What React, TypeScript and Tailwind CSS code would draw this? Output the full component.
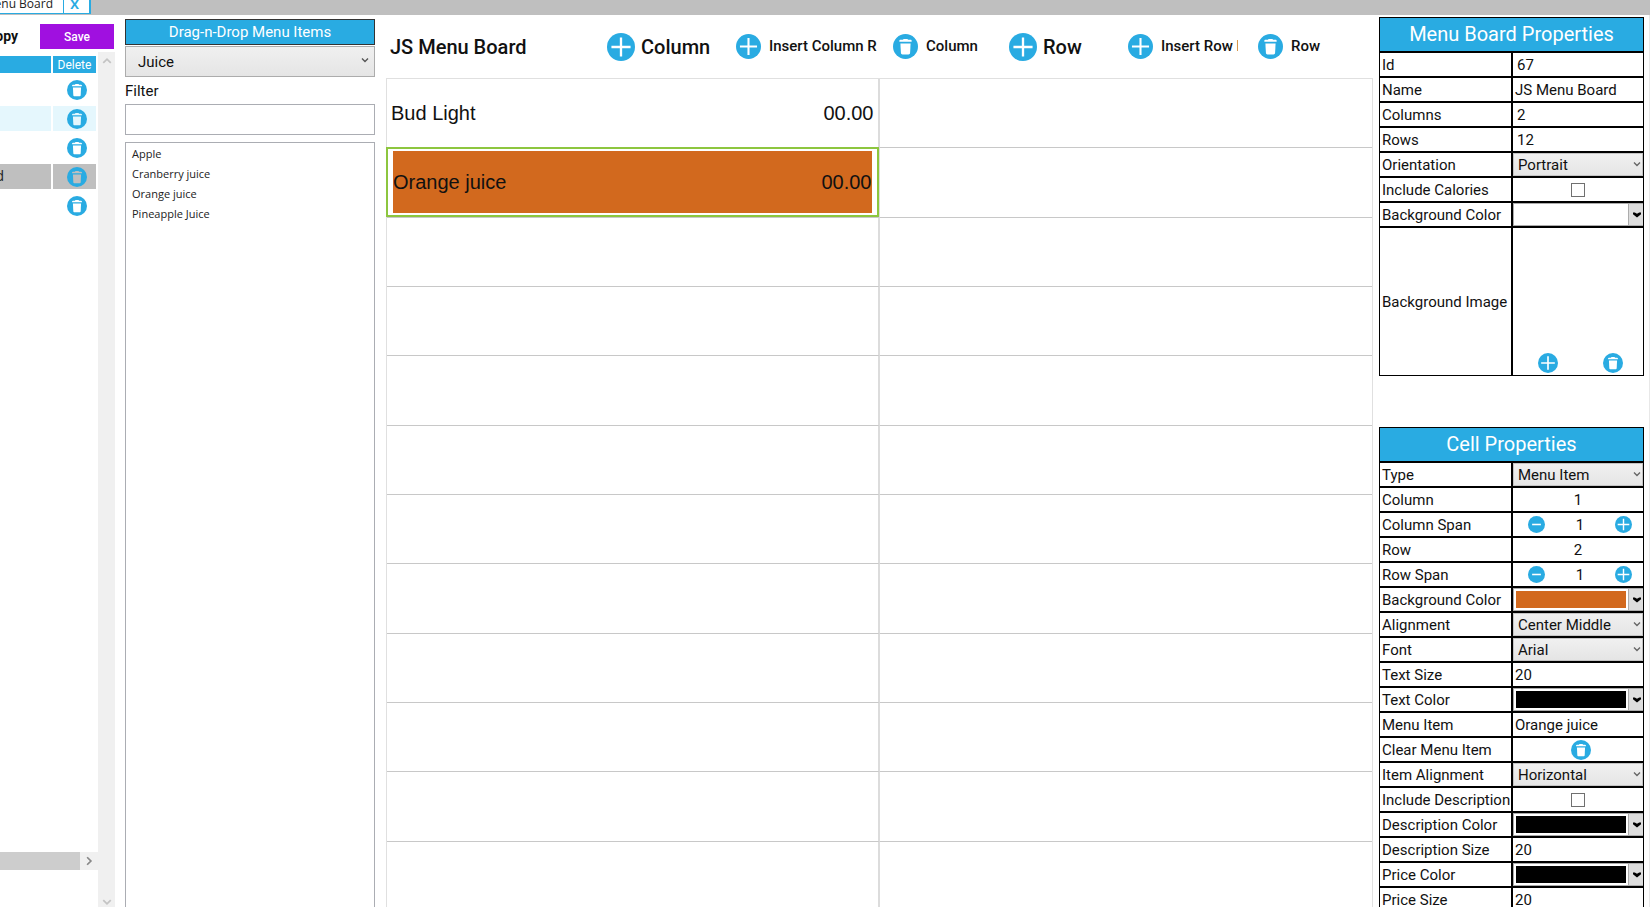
import React, { useState } from 'react';

type IconProps = { className?: string };

const PlusIcon: React.FC<IconProps> = ({ className }) => (
  <svg viewBox="0 0 24 24" className={className} aria-hidden>
    <circle cx="12" cy="12" r="12" fill="#29abe2" />
    <path d="M12 3.8v16.4M3.8 12h16.4" stroke="#fff" strokeWidth="2" fill="none" />
  </svg>
);

const MinusIcon: React.FC<IconProps> = ({ className }) => (
  <svg viewBox="0 0 24 24" className={className} aria-hidden>
    <circle cx="12" cy="12" r="12" fill="#29abe2" />
    <path d="M5.8 12h12.4" stroke="#fff" strokeWidth="2.2" fill="none" />
  </svg>
);

const TrashIcon: React.FC<IconProps> = ({ className }) => (
  <svg viewBox="0 0 24 24" className={className} aria-hidden>
    <circle cx="12" cy="12" r="12" fill="#29abe2" />
    <path
      d="M9.4 5.6c.2-.6.6-.8 1.200-.8h2.800c.6 0 1 .2 1.200.8h2.200c.7 0 1.100.4 1.100 1v.9H6.100v-.9c0-.6.4-1 1.100-1z"
      fill="currentColor"
    />
    <path d="M7.100 9h9.800l-.5 9.200c-.1.900-.6 1.400-1.500 1.400H9.100c-.9 0-1.400-.5-1.500-1.400z" fill="currentColor" />
  </svg>
);

const Chevron: React.FC<IconProps> = ({ className }) => (
  <svg viewBox="0 0 8 8" className={className} aria-hidden>
    <path d="M1 2.500l3 3 3-3" stroke="currentColor" strokeWidth="1.400" fill="none" />
  </svg>
);

const BOARDS = [
  { id: 63, tail: '', cell: 'bg-white', icon: 'size-5 text-white' },
  { id: 64, tail: '', cell: 'bg-[#e5f7fd]', icon: 'size-5 text-[#e5f7fd]' },
  { id: 65, tail: '', cell: 'bg-white', icon: 'size-5 text-white' },
  { id: 67, tail: 'JS Menu Board', cell: 'bg-[#bfbfbf]', icon: 'size-5 text-[#bfbfbf]' },
  { id: 68, tail: '', cell: 'bg-white', icon: 'size-5 text-white' },
];

const ITEMS = ['Apple', 'Cranberry juice', 'Orange juice', 'Pineapple Juice'];

const ROWS = 12;

const BoardList: React.FC = () => (
  <aside className="flex w-[115px] shrink-0 flex-col">
    <div className="flex h-[37px] shrink-0 items-end justify-between pr-px pb-[3px]">
      <button className="flex h-[25px] w-[18px] items-center justify-end text-[14px] font-bold">Copy</button>
      <button className="h-[25px] w-[74px] bg-[#a010e0] text-[12px] font-medium text-white">Save</button>
    </div>
    <div className="flex min-h-0 flex-1">
      <div className="flex w-[98px] flex-col pb-[37px]">
        <div className="flex-1 overflow-hidden pr-0.5">
          <table className="w-full table-fixed border-separate border-spacing-x-0 border-spacing-y-1">
            <thead>
              <tr className="h-[17px] text-[12px] leading-[15px] text-white">
                <th className="w-[51px] bg-[#29abe2] p-0" aria-label="Name" />
                <th className="border-l-2 border-white bg-[#29abe2] bg-clip-padding p-0 pt-0.5 font-normal">Delete</th>
              </tr>
            </thead>
            <tbody>
              {BOARDS.map((b) => (
                <tr key={b.id} className="h-[25px]">
                  <td className={`p-0 ${b.cell}`}>
                    <div className="flex w-1 justify-end pb-0.5 whitespace-nowrap font-['Open_Sans',sans-serif] text-[14px] leading-5 text-[#222]">
                      {b.tail}
                    </div>
                  </td>
                  <td className={`border-l-2 border-white bg-clip-padding p-0 ${b.cell}`}>
                    <button className="mx-auto block pl-1" aria-label="Delete board">
                      <TrashIcon className={b.icon} />
                    </button>
                  </td>
                </tr>
              ))}
            </tbody>
          </table>
        </div>
        <div className="flex h-[18px] shrink-0 bg-[#f0f0f0]">
          <div className="w-20 bg-[#cdcdcd]" />
          <button className="flex flex-1 items-center justify-center text-[#888]" aria-label="Scroll right">
            <Chevron className="size-2.5 -rotate-90" />
          </button>
        </div>
      </div>
      <div className="flex flex-1 flex-col items-center justify-between bg-[#f0f0f0] text-[#c4c4c4]">
        <button className="pt-1" aria-label="Scroll up">
          <Chevron className="size-2.5 rotate-180" />
        </button>
        <button aria-label="Scroll down">
          <Chevron className="size-2.5" />
        </button>
      </div>
    </div>
  </aside>
);

const ItemPicker: React.FC = () => {
  const [filter, setFilter] = useState('');
  const shown = ITEMS.filter((i) => i.toLowerCase().includes(filter.toLowerCase()));

  return (
    <section className="flex w-[250px] shrink-0 flex-col pt-1">
      <h2 className="flex h-[26px] shrink-0 items-center justify-center border border-[#333] bg-[#29abe2] text-[15px] text-white">
        Drag-n-Drop Menu Items
      </h2>
      <div className="relative mt-px">
        <select
          aria-label="Category"
          className="block h-[31px] w-full appearance-none border border-[#acacac] bg-linear-to-b from-[#f0f0f0] to-[#e5e5e5] pt-0.5 pl-3 text-[15px]"
        >
          <option>Juice</option>
        </select>
        <Chevron className="pointer-events-none absolute top-2.5 right-1.5 size-2 text-[#555]" />
      </div>
      <label htmlFor="filter" className="flex h-[27px] shrink-0 items-center text-[15px] leading-5">
        Filter
      </label>
      <input
        id="filter"
        value={filter}
        onChange={(e) => setFilter(e.target.value)}
        className="h-[31px] shrink-0 border border-[#abadb3] px-1 text-[15px] outline-none"
      />
      <ul className="mt-[7px] flex-1 border border-b-0 border-[#abadb3] px-1.5 py-px font-['Open_Sans',sans-serif] text-[11px] leading-5 text-[#222]">
        {shown.map((i) => (
          <li key={i} draggable>{i}</li>
        ))}
      </ul>
    </section>
  );
};

const Board: React.FC = () => (
  <main className="flex min-w-0 flex-1 flex-col">
    <div className="grid h-[63px] shrink-0 grid-cols-[221fr_129fr_157fr_116fr_119fr_130fr_115fr] items-center font-medium *:min-w-0">
      <h1 className="pl-1 text-[20px]">JS Menu Board</h1>
      <button className="flex items-center gap-1.5 text-[20px]">
        <PlusIcon className="size-7" />
        Column
      </button>
      <button className="flex items-center gap-2 pr-4 text-[15px]">
        <PlusIcon className="size-[25px] shrink-0" />
        <span className="overflow-hidden whitespace-nowrap">Insert Column Right</span>
      </button>
      <button className="flex items-center gap-2 text-[15px]">
        <TrashIcon className="size-[25px] text-white" />
        Column
      </button>
      <button className="flex items-center gap-1.5 text-[20px]">
        <PlusIcon className="size-7" />
        Row
      </button>
      <button className="flex items-center gap-2 pr-5 text-[15px]">
        <PlusIcon className="size-[25px] shrink-0" />
        <span className="overflow-hidden whitespace-nowrap">Insert Row Below</span>
      </button>
      <button className="flex items-center gap-2 text-[15px]">
        <TrashIcon className="size-[25px] text-white" />
        Row
      </button>
    </div>
    <div className="-mb-1 grid min-h-0 flex-1 auto-rows-fr grid-cols-2 border-x border-t border-[#e0e0e0] font-['Liberation_Sans',Arial,sans-serif] text-[20px]">
      {Array.from({ length: ROWS }, (_, row) => (
        <React.Fragment key={row}>
          <div className="min-h-0 border-r-2 border-b border-r-[#dcdcdc] border-b-[#c8c8c8]">
            {row === 0 && (
              <div className="flex h-full items-center justify-between px-1">
                <span>Bud Light</span>
                <span>00.00</span>
              </div>
            )}
            {row === 1 && (
              <div className="-mt-px -mr-px -ml-px h-[calc(100%+1px)] border-2 border-[#8dc63f] px-[5px] py-0.5">
                <div className="flex h-full items-center justify-between bg-[#d2691e]">
                  <span>Orange juice</span>
                  <span>00.00</span>
                </div>
              </div>
            )}
          </div>
          <div className="min-h-0 border-b border-[#c8c8c8]" />
        </React.Fragment>
      ))}
    </div>
  </main>
);

const PropTable: React.FC<{ title: string; children: React.ReactNode }> = ({ title, children }) => (
  <table className="w-full table-fixed border-separate border-spacing-0 border border-black text-[15px] leading-5">
    <colgroup>
      <col className="w-[131px]" />
      <col />
    </colgroup>
    <thead>
      <tr>
        <th colSpan={2} className="h-[33px] bg-[#29abe2] p-0 pb-0.5 text-[20px] font-normal text-white">
          {title}
        </th>
      </tr>
    </thead>
    <tbody>{children}</tbody>
  </table>
);

const Prop: React.FC<{ label: string; id?: string; children: React.ReactNode }> = ({ label, id, children }) => (
  <tr className="h-[25px]">
    <th scope="row" className="border-t-2 border-black p-0 pl-0.5 text-left font-normal whitespace-nowrap">
      {id ? <label htmlFor={id}>{label}</label> : label}
    </th>
    <td className="border-t-2 border-l-2 border-black p-0">{children}</td>
  </tr>
);

const TextProp: React.FC<{ label: string; id: string; value: string }> = ({ label, id, value }) => (
  <Prop label={label} id={id}>
    <input id={id} defaultValue={value} className="block h-[23px] w-full bg-transparent pl-0.5 outline-none" />
  </Prop>
);

const SelectProp: React.FC<{ label: string; id: string; value: string }> = ({ label, id, value }) => (
  <Prop label={label} id={id}>
    <div className="relative">
      <select
        id={id}
        className="block h-[23px] w-full appearance-none border border-[#c4c4c4] bg-linear-to-b from-[#f0f0f0] to-[#e5e5e5] pl-1"
      >
        <option>{value}</option>
      </select>
      <Chevron className="pointer-events-none absolute top-[7px] right-0.5 size-2 text-[#666]" />
    </div>
  </Prop>
);

const CheckProp: React.FC<{ label: string; id: string }> = ({ label, id }) => (
  <Prop label={label} id={id}>
    <input id={id} type="checkbox" className="mx-auto block size-3.5 appearance-none border border-[#707070] bg-white" />
  </Prop>
);

const ColorProp: React.FC<{ label: string; id: string; swatch: string }> = ({ label, id, swatch }) => (
  <Prop label={label} id={id}>
    <button id={id} aria-haspopup="listbox" className="flex h-[23px] w-full border border-r-0 border-[#acacac]">
      <span className="flex h-full flex-1 p-0.5">
        <span className={`flex-1 ${swatch}`} />
      </span>
      <span className="flex h-full w-[15px] items-center justify-end border-l border-[#acacac] bg-[#dddddd] pr-px">
        <svg viewBox="0 0 10 6" className="h-1.5 w-2.5" aria-hidden>
          <path d="M1 .5h1.800L5 1.800 7.200.5H9v1.800L5 5.500 1 2.300z" fill="#000" />
        </svg>
      </span>
    </button>
  </Prop>
);

const SpanProp: React.FC<{ label: string }> = ({ label }) => {
  const [span, setSpan] = useState(1);
  return (
    <Prop label={label}>
      <div className="flex items-center justify-between pr-[11px] pl-[15px]">
        <button aria-label={`Decrease ${label}`} onClick={() => setSpan(Math.max(1, span - 1))}>
          <MinusIcon className="size-[17px]" />
        </button>
        <span>{span}</span>
        <button aria-label={`Increase ${label}`} onClick={() => setSpan(span + 1)}>
          <PlusIcon className="size-[17px]" />
        </button>
      </div>
    </Prop>
  );
};

const Properties: React.FC = () => (
  <aside className="flex w-[271px] shrink-0 flex-col gap-[51px] border-r border-[#e8e8e8] pt-0.5 pr-[5px]">
    <PropTable title="Menu Board Properties">
      <Prop label="Id"><span className="pl-1">67</span></Prop>
      <TextProp label="Name" id="board-name" value="JS Menu Board" />
      <Prop label="Columns"><span className="pl-1">2</span></Prop>
      <Prop label="Rows"><span className="pl-1">12</span></Prop>
      <SelectProp label="Orientation" id="orientation" value="Portrait" />
      <CheckProp label="Include Calories" id="calories" />
      <ColorProp label="Background Color" id="board-bg" swatch="bg-white" />
      <Prop label="Background Image">
        <div className="flex h-[147px] items-end justify-between pr-5 pb-0.5 pl-[25px]">
          <button aria-label="Add image"><PlusIcon className="size-5" /></button>
          <button aria-label="Delete image"><TrashIcon className="size-5 text-white" /></button>
        </div>
      </Prop>
    </PropTable>

    <PropTable title="Cell Properties">
      <SelectProp label="Type" id="type" value="Menu Item" />
      <Prop label="Column"><div className="text-center">1</div></Prop>
      <SpanProp label="Column Span" />
      <Prop label="Row"><div className="text-center">2</div></Prop>
      <SpanProp label="Row Span" />
      <ColorProp label="Background Color" id="cell-bg" swatch="bg-[#d2691e]" />
      <SelectProp label="Alignment" id="alignment" value="Center Middle" />
      <SelectProp label="Font" id="font" value="Arial" />
      <TextProp label="Text Size" id="text-size" value="20" />
      <ColorProp label="Text Color" id="text-color" swatch="bg-black" />
      <Prop label="Menu Item"><span className="pl-0.5">Orange juice</span></Prop>
      <Prop label="Clear Menu Item">
        <button aria-label="Clear menu item" className="mx-auto block pl-1.5">
          <TrashIcon className="size-5 text-white" />
        </button>
      </Prop>
      <SelectProp label="Item Alignment" id="item-alignment" value="Horizontal" />
      <CheckProp label="Include Description" id="description" />
      <ColorProp label="Description Color" id="desc-color" swatch="bg-black" />
      <TextProp label="Description Size" id="desc-size" value="20" />
      <ColorProp label="Price Color" id="price-color" swatch="bg-black" />
      <TextProp label="Price Size" id="price-size" value="20" />
    </PropTable>
  </aside>
);

const App: React.FC = () => (
  <div className="flex h-screen flex-col overflow-hidden bg-white font-['Roboto',sans-serif] text-[#111]">
    <header className="flex h-[15px] shrink-0 items-end overflow-hidden bg-[#bfbfbf] pb-px">
      <div className="flex h-5 w-[91px] shrink-0 border-r-2 border-b border-[#29abe2] bg-white font-['Open_Sans',sans-serif] text-[12px] leading-5">
        <a href="#board" className="flex w-[63px] justify-end pr-2.5 whitespace-nowrap text-[#222]">JS Menu Board</a>
        <button className="flex-1 border-l border-[#29abe2] pr-1 text-center text-[13px] font-bold text-[#29abe2]" aria-label="Close tab">
          X
        </button>
      </div>
    </header>
    <div className="flex min-h-0 flex-1">
      <BoardList />
      <div className="flex min-w-0 flex-1 gap-[11px] pr-1.5 pl-2.5">
        <ItemPicker />
        <Board />
      </div>
      <Properties />
    </div>
  </div>
);

export default App;
